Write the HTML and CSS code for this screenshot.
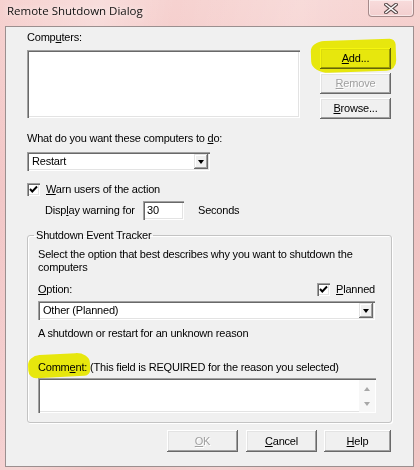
FILE: index.html
```html
<!DOCTYPE html>
<html>
<head>
<meta charset="utf-8">
<title>Remote Shutdown Dialog</title>
<link rel="stylesheet" href="styles.css">
</head>
<body>
<div class="window">
  <div class="titlebar">
    <span class="title">Remote Shutdown Dialog</span>
    <div class="close">
      <svg width="14" height="11" viewBox="0 0 14 11">
        <path d="M2 1.5 L12 9.5 M12 1.5 L2 9.5" stroke="#5a4a4a" stroke-width="3.6" stroke-linecap="square"/>
        <path d="M2 1.5 L12 9.5 M12 1.5 L2 9.5" stroke="#ffffff" stroke-width="1.6" stroke-linecap="square"/>
      </svg>
    </div>
  </div>
  <div class="client">
    <div class="top-row">
      <div class="computers">
        <div class="lbl">Comp<u>u</u>ters:</div>
        <div class="listbox sunken"></div>
      </div>
      <div class="side-buttons">
        <div class="btn"><span><u>A</u>dd...</span></div>
        <div class="btn disabled"><span><u>R</u>emove</span></div>
        <div class="btn"><span><u>B</u>rowse...</span></div>
      </div>
    </div>
    <div class="lbl question">What do you want these computers to <u>d</u>o:</div>
    <div class="combo sunken combo-action">
      <span class="combo-text">Restart</span>
      <span class="combo-arrow"><span class="tri"></span></span>
    </div>
    <div class="check-row">
      <span class="checkbox sunken">
        <svg width="9" height="9" viewBox="0 0 9 9"><path d="M1 4 L3.3 6.5 L8 1.5" fill="none" stroke="#000" stroke-width="1.9"/></svg>
      </span>
      <span class="lbl"><u>W</u>arn users of the action</span>
    </div>
    <div class="warn-row">
      <span class="lbl warn-lbl">Disp<u>l</u>ay warning for</span>
      <span class="field sunken"><span>30</span></span>
      <span class="lbl seconds">Seconds</span>
    </div>
    <fieldset class="group">
      <legend class="lbl">Shutdown Event Tracker</legend>
      <div class="lbl para">Select the option that best describes why you want to shutdown the computers</div>
      <div class="option-row">
        <span class="lbl"><u>O</u>ption:</span>
        <span class="planned">
          <span class="checkbox sunken">
            <svg width="9" height="9" viewBox="0 0 9 9"><path d="M1 4 L3.3 6.5 L8 1.5" fill="none" stroke="#000" stroke-width="1.9"/></svg>
          </span>
          <span class="lbl"><u>P</u>lanned</span>
        </span>
      </div>
      <div class="combo sunken combo-option">
        <span class="combo-text">Other (Planned)</span>
        <span class="combo-arrow"><span class="tri"></span></span>
      </div>
      <div class="lbl reason">A shutdown or restart for an unknown reason</div>
      <div class="lbl comment">Comm<u>e</u>nt: (This field is REQUIRED for the reason you selected)</div>
      <div class="textarea sunken">
        <div class="ta-body"></div>
        <div class="ta-scroll">
          <span class="stri up"></span>
          <span class="stri down"></span>
        </div>
      </div>
    </fieldset>
    <div class="bottom-buttons">
      <div class="btn disabled w70"><span><u>O</u>K</span></div>
      <div class="btn w71"><span><u>C</u>ancel</span></div>
      <div class="btn w67"><span><u>H</u>elp</span></div>
    </div>
  </div>
  <div class="hl hl-add"></div>
  <div class="hl hl-comment"></div>
</div>
</body>
</html>
```

FILE: styles.css
```css
* { box-sizing: border-box; }
html, body { margin: 0; padding: 0; }
body { width: 420px; height: 470px; overflow: hidden; background: #f2c6c6; }

.window {
  position: relative;
  width: 420px;
  height: 470px;
  background:
    linear-gradient(100deg, rgba(255,255,255,0) 0%, rgba(255,255,255,0.25) 20%, rgba(255,255,255,0) 35%, rgba(255,255,255,0.2) 60%, rgba(255,255,255,0) 80%),
    linear-gradient(180deg, #f6d2d0 0%, #f1c2c2 40%, #f2c5c5 100%);
  display: flex;
  flex-direction: column;
  font-family: "Liberation Sans", Arial, sans-serif;
  font-size: 11px;
  letter-spacing: -0.2px;
  color: #000;
}

.titlebar {
  height: 26px;
  display: flex;
  align-items: flex-start;
  justify-content: space-between;
  padding-left: 7px;
}
.title {
  font-family: "Open Sans", "Noto Sans", sans-serif;
  font-size: 11.5px;
  letter-spacing: 0;
  line-height: 14px;
  margin-top: 4px;
  color: #111;
  text-shadow: 0 0 6px rgba(255,255,255,0.9);
}
.close {
  width: 46px;
  height: 17px;
  margin-right: 6px;
  border: 1px solid #a58a8a;
  border-top: none;
  border-radius: 0 0 4px 4px;
  background: linear-gradient(180deg, #f8dcdc, #f3cfcf);
  display: flex;
  align-items: center;
  justify-content: center;
  box-shadow: inset 0 0 0 1px rgba(255,255,255,0.5);
}

.client {
  margin: 0 6px 3px 5px;
  height: 441px;
  border: 1px solid #9b8f8f;
  background: #f0f0f0;
  padding: 4px 22px 0 21px;
  display: flex;
  flex-direction: column;
}

.lbl { line-height: 13px; white-space: nowrap; }
u { text-decoration: underline; text-underline-offset: 1px; }

.sunken {
  background: #fff;
  box-shadow:
    inset 1px 1px 0 #a0a0a0,
    inset 2px 2px 0 #696969,
    inset -1px -1px 0 #ffffff,
    inset -2px -2px 0 #e3e3e3;
}

.top-row { display: flex; height: 89px; }
.computers { display: flex; flex-direction: column; }
.listbox { width: 273px; height: 68px; margin-top: 6px; }
.side-buttons {
  display: flex;
  flex-direction: column;
  gap: 4px;
  margin-left: 20px;
  padding-top: 17px;
}
.side-buttons .btn { width: 71px; height: 21px; }

.btn {
  background: #f0f0f0;
  box-shadow:
    inset -1px -1px 0 #696969,
    inset 1px 1px 0 #ffffff,
    inset -2px -2px 0 #a0a0a0,
    inset 2px 2px 0 #e3e3e3;
  display: flex;
  align-items: center;
  justify-content: center;
  line-height: 13px;
}
.btn.disabled { color: #a0a0a0; text-shadow: 1px 1px 0 #fff; }

.question { margin-top: 12px; }

.combo {
  height: 19px;
  display: flex;
  align-items: center;
  justify-content: space-between;
  padding: 2px;
}
.combo-action { width: 183px; margin-top: 7px; }
.combo-text { padding-left: 3px; line-height: 13px; }
.combo-arrow {
  width: 14px;
  height: 15px;
  background: #f0f0f0;
  box-shadow:
    inset -1px -1px 0 #696969,
    inset 1px 1px 0 #e3e3e3,
    inset -2px -2px 0 #a0a0a0,
    inset 2px 2px 0 #ffffff;
  display: flex;
  align-items: center;
  justify-content: center;
}
.tri {
  width: 0;
  height: 0;
  border-left: 3.5px solid transparent;
  border-right: 3.5px solid transparent;
  border-top: 4px solid #000;
  margin-top: 1px;
}

.check-row {
  margin-top: 12px;
  height: 13px;
  display: flex;
  align-items: center;
  gap: 6px;
}
.checkbox {
  width: 13px;
  height: 13px;
  display: inline-flex;
  align-items: center;
  justify-content: center;
  flex: none;
}

.warn-row {
  margin-top: 5px;
  padding-left: 18px;
  height: 19px;
  display: flex;
  align-items: center;
}
.warn-lbl { width: 98px; }
.field {
  width: 41px;
  height: 19px;
  display: flex;
  align-items: center;
  padding-left: 4px;
  line-height: 13px;
}
.seconds { margin-left: 14px; }

.group {
  margin: 9px 0 0 0;
  width: 364px;
  border: 1px solid #c3c3c3;
  border-radius: 3px;
  padding: 6px 15px 9px 10px;
  box-shadow: 1px 1px 0 #fff, inset 1px 1px 0 #fff;
}
.group legend {
  padding: 0 2px;
  margin-left: -4px;
}
.para { white-space: normal; width: 330px; }
.option-row {
  margin-top: 9px;
  height: 13px;
  display: flex;
  align-items: center;
  justify-content: space-between;
}
.planned { display: flex; align-items: center; gap: 6px; padding-right: 1px; }
.combo-option { width: 337px; margin-top: 5px; }
.reason { margin-top: 7px; }
.comment { margin-top: 21px; }
.textarea {
  margin-top: 4px;
  width: 338px;
  height: 35px;
  display: flex;
  padding: 2px 1px 1px 2px;
}
.ta-body { flex: 1; }
.ta-scroll {
  width: 16px;
  background: #f7f7f7;
  display: flex;
  flex-direction: column;
  align-items: center;
  justify-content: space-between;
  padding: 7px 0 6px;
}
.stri { width: 0; height: 0; border-left: 3.5px solid transparent; border-right: 3.5px solid transparent; }
.stri.up { border-bottom: 4px solid #a8a8a8; }
.stri.down { border-top: 4px solid #a8a8a8; }

.bottom-buttons {
  margin-top: 7px;
  display: flex;
  justify-content: flex-end;
  gap: 8px;
}
.bottom-buttons .btn { height: 22px; }
.w70 { width: 71px; }
.w71 { width: 71px; margin-right: -1px; }
.w67 { width: 67px; }

.hl {
  position: absolute;
  background: #f6f600;
  mix-blend-mode: multiply;
  opacity: 0.95;
}
.hl-add {
  left: 311px;
  top: 40px;
  width: 85px;
  height: 32px;
  border-radius: 14px 6px 10px 18px / 10px 6px 10px 12px;
  transform: rotate(-2deg);
}
.hl-comment {
  left: 28px;
  top: 354px;
  width: 62px;
  height: 23px;
  border-radius: 12px 14px 6px 8px / 10px 10px 6px 8px;
  transform: rotate(-3deg);
}
```
